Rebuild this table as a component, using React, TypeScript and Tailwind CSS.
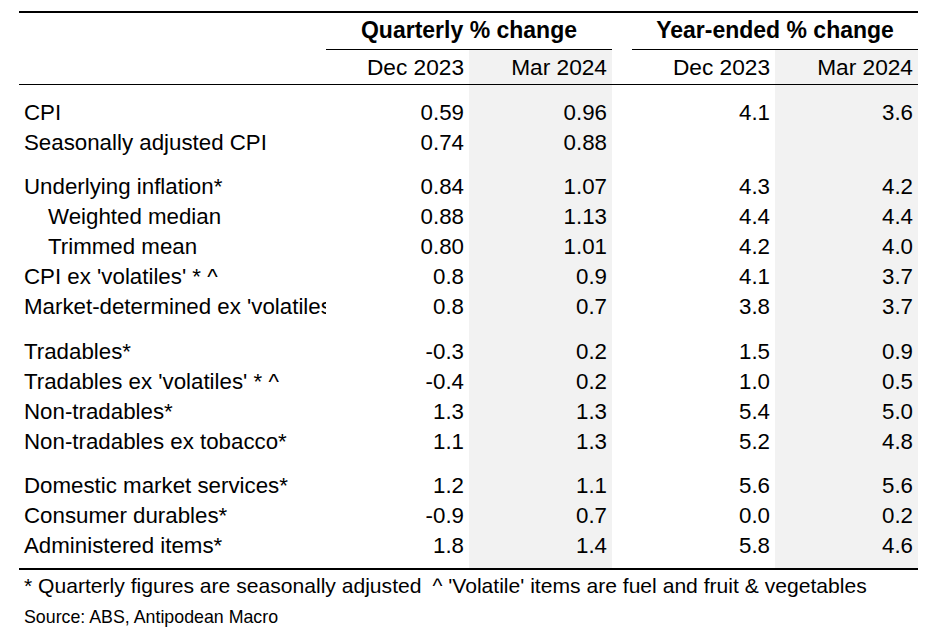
type Row = {
  label: string;
  indent?: boolean;
  q1: string;
  q2: string;
  y1: string;
  y2: string;
};

// null marks the small gap between groups of rows
const rows: (Row | null)[] = [
  { label: "CPI", q1: "0.59", q2: "0.96", y1: "4.1", y2: "3.6" },
  { label: "Seasonally adjusted CPI", q1: "0.74", q2: "0.88", y1: "", y2: "" },
  null,
  { label: "Underlying inflation*", q1: "0.84", q2: "1.07", y1: "4.3", y2: "4.2" },
  { label: "Weighted median", indent: true, q1: "0.88", q2: "1.13", y1: "4.4", y2: "4.4" },
  { label: "Trimmed mean", indent: true, q1: "0.80", q2: "1.01", y1: "4.2", y2: "4.0" },
  { label: "CPI ex 'volatiles' * ^", q1: "0.8", q2: "0.9", y1: "4.1", y2: "3.7" },
  { label: "Market-determined ex 'volatiles'", q1: "0.8", q2: "0.7", y1: "3.8", y2: "3.7" },
  null,
  { label: "Tradables*", q1: "-0.3", q2: "0.2", y1: "1.5", y2: "0.9" },
  { label: "Tradables ex 'volatiles' * ^", q1: "-0.4", q2: "0.2", y1: "1.0", y2: "0.5" },
  { label: "Non-tradables*", q1: "1.3", q2: "1.3", y1: "5.4", y2: "5.0" },
  { label: "Non-tradables ex tobacco*", q1: "1.1", q2: "1.3", y1: "5.2", y2: "4.8" },
  null,
  { label: "Domestic market services*", q1: "1.2", q2: "1.1", y1: "5.6", y2: "5.6" },
  { label: "Consumer durables*", q1: "-0.9", q2: "0.7", y1: "0.0", y2: "0.2" },
  { label: "Administered items*", q1: "1.8", q2: "1.4", y1: "5.8", y2: "4.6" },
];

const cols = "grid grid-cols-[307px_143px_143px_20px_143px_143px]";

function Spacer({ h }: { h: string }) {
  return (
    <div className={`${cols} ${h}`}>
      <div />
      <div />
      <div className="bg-[#f2f2f2]" />
      <div />
      <div />
      <div className="bg-[#f2f2f2]" />
    </div>
  );
}

function DataRow({ row }: { row: Row }) {
  return (
    <div className={`${cols} h-[30px] leading-[30px] text-[22.3px]`}>
      <div className={`overflow-hidden whitespace-nowrap ${row.indent ? "pl-[29px]" : "pl-[5px]"}`}>
        {row.label}
      </div>
      <div className="text-right pr-[5px]">{row.q1}</div>
      <div className="text-right pr-[5px] bg-[#f2f2f2]">{row.q2}</div>
      <div />
      <div className="text-right pr-[5px]">{row.y1}</div>
      <div className="text-right pr-[5px] bg-[#f2f2f2]">{row.y2}</div>
    </div>
  );
}

export default function App() {
  return (
    <div
      className="w-[928px] h-[632px] bg-white text-black pt-[11px] pl-[19px] overflow-hidden"
      style={{ fontFamily: '"Liberation Sans", Arial, sans-serif' }}
    >
      <div className="w-[899px] border-t-2 border-black">
        {/* group headings */}
        <div className={`${cols} h-[37px]`}>
          <div />
          <div className="col-span-2 border-b border-black text-center font-bold text-[23px] leading-[34px]">
            Quarterly % change
          </div>
          <div />
          <div className="col-span-2 border-b border-black text-center font-bold text-[23px] leading-[34px]">
            Year-ended % change
          </div>
        </div>

        {/* period headings */}
        <div className={`${cols} h-[35px] border-b border-black text-[22.7px] leading-[34px]`}>
          <div />
          <div className="text-right pr-[5px]">Dec 2023</div>
          <div className="text-right pr-[5px] bg-[#f2f2f2]">Mar 2024</div>
          <div />
          <div className="text-right pr-[5px]">Dec 2023</div>
          <div className="text-right pr-[5px] bg-[#f2f2f2]">Mar 2024</div>
        </div>

        <div className="border-b-2 border-black">
          <Spacer h="h-[12.5px]" />
          {rows.map((r, i) => (r ? <DataRow key={i} row={r} /> : <Spacer key={i} h="h-[14.5px]" />))}
          <Spacer h="h-[7px]" />
        </div>

        <div className="mt-[1px] pl-[5px] text-[21.1px] leading-[30px] whitespace-nowrap">
          <span>* Quarterly figures are seasonally adjusted</span>
          <span className="ml-[11px]">^ 'Volatile' items are fuel and fruit &amp; vegetables</span>
        </div>
        <div className="mt-[1px] pl-[5px] text-[17.8px] leading-[30px]">Source: ABS, Antipodean Macro</div>
      </div>
    </div>
  );
}
